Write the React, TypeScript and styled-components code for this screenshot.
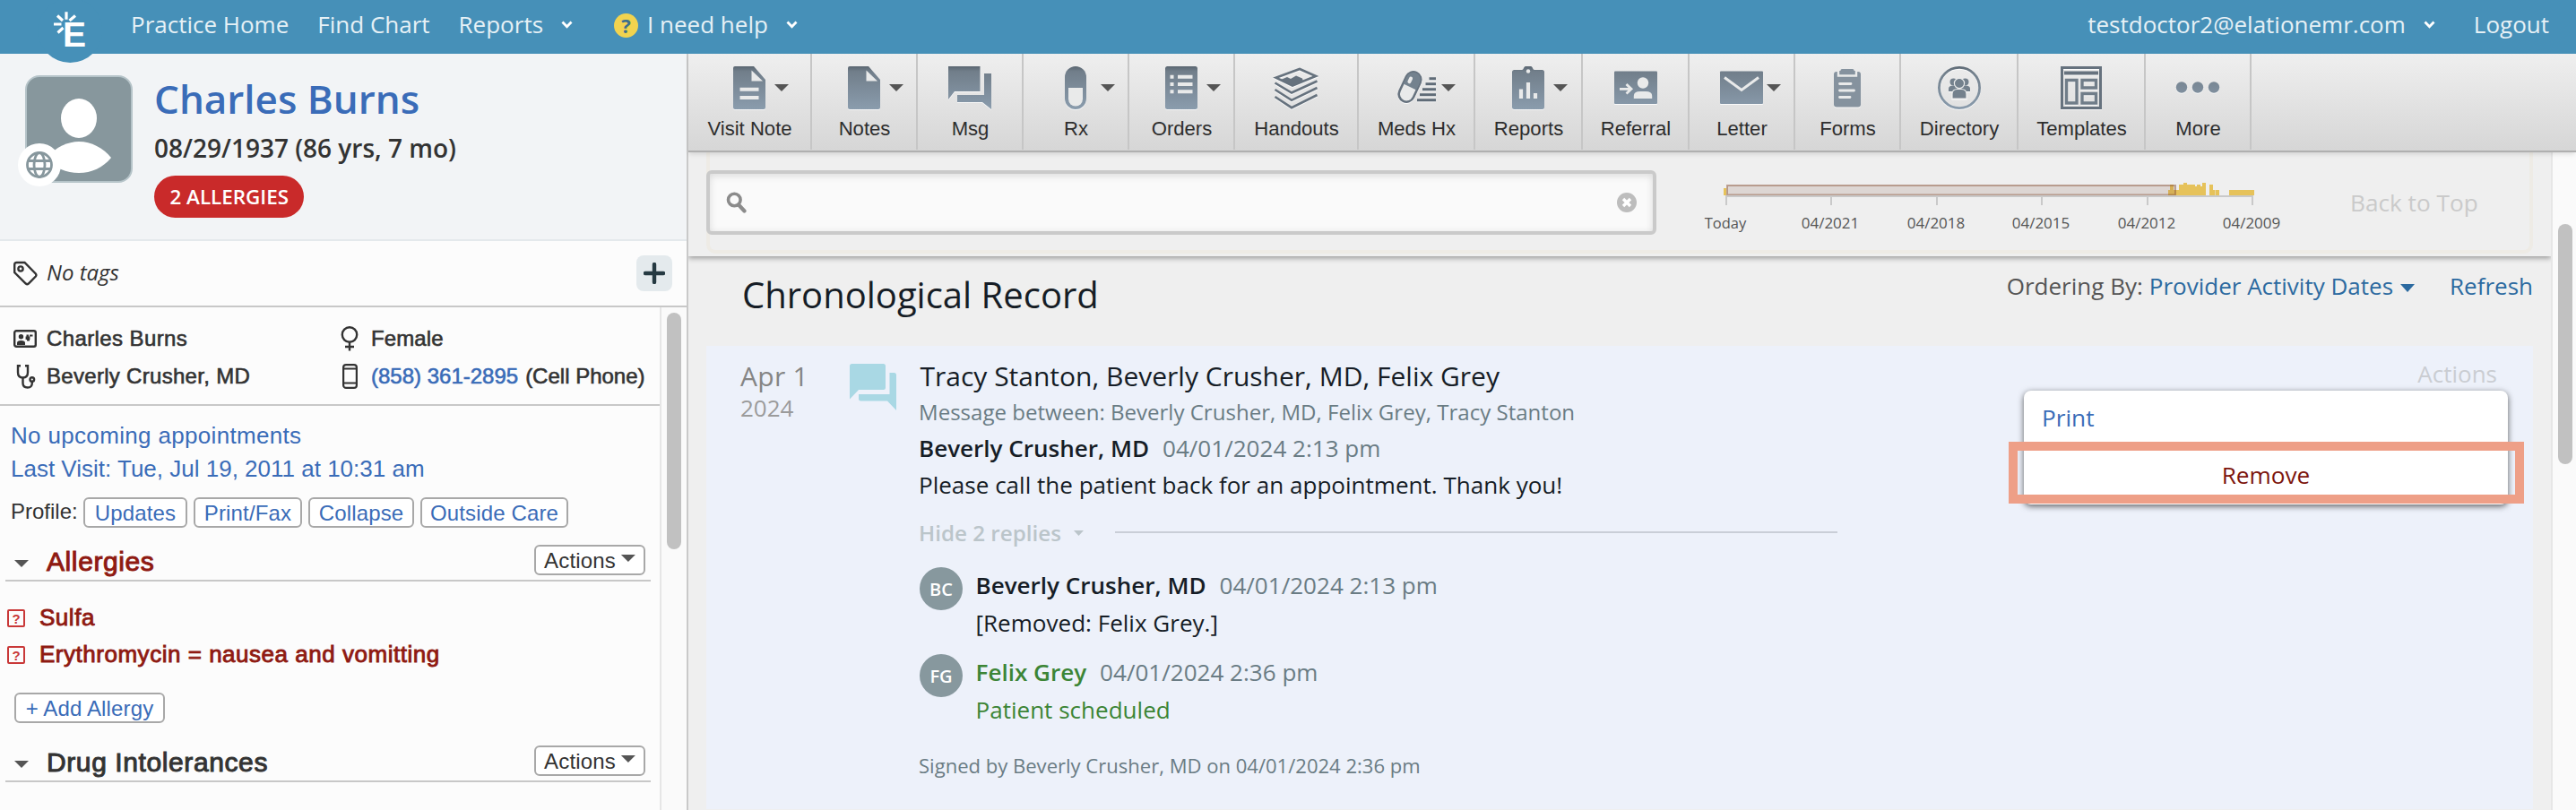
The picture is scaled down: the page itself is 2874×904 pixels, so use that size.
import React from 'react';
import styled, { createGlobalStyle } from 'styled-components';
import { FaUsers } from 'react-icons/fa';

const openSans = '"Open Sans", "Noto Sans", sans-serif';
const helvetica = '"Liberation Sans", Arial, sans-serif';
const link = '#3a6cb8';

const GlobalStyle = createGlobalStyle`
  * { box-sizing: border-box; }
  body { margin: 0; overflow: hidden; background: #efefef; }
`;

const Page = styled.div`
  display: flex;
  flex-direction: column;
  width: 2874px;
  height: 904px;
  overflow: hidden;
  font-family: ${openSans};
  color: #333;
  white-space: nowrap;
`;

/* ---------- top navigation ---------- */

const TopBar = styled.header`
  position: relative;
  z-index: 3;
  flex: none;
  display: flex;
  align-items: center;
  height: 60px;
  padding: 0 30px 6px 146px;
  background: #4690b8;
  color: #e6f1f6;
  font-size: 26px;
  line-height: 54px;
`;
const Logo = styled.svg`
  position: absolute;
  left: 42px;
  top: 0;
`;
const NavItem = styled.span<{ $before?: number }>`
  display: flex;
  align-items: center;
  gap: 20px;
  margin-left: ${(p) => p.$before ?? 0}px;
`;
const HelpMark = styled.span`
  width: 27px;
  height: 27px;
  margin: 2px -10px 0 0;
  border-radius: 50%;
  background: #f1d34f;
  color: #3c6f8c;
  font: 700 22px/27px ${openSans};
  text-align: center;
`;
const Spacer = styled.span`
  flex: 1;
`;

const Chevron = () => (
  <svg width="13" height="9" viewBox="0 0 13 9">
    <path d="M1.5 1.5 6.5 6.8 11.5 1.5" fill="none" stroke="#fff" strokeWidth="2.8" />
  </svg>
);

/* ---------- shared ---------- */

const Triangle = styled.span<{ $w?: number; $h?: number; $color?: string }>`
  flex: none;
  width: ${(p) => p.$w ?? 16}px;
  height: ${(p) => p.$h ?? 8}px;
  background: ${(p) => p.$color ?? '#555'};
  clip-path: polygon(0 0, 100% 0, 50% 100%);
`;
const Body = styled.div`
  flex: 1;
  min-height: 0;
  display: flex;
`;
const ScrollTrack = styled.div<{ $w: number; $top: number }>`
  flex: none;
  width: ${(p) => p.$w}px;
  padding: ${(p) => p.$top}px 0 0 6px;
  border-left: 2px solid #e6e6e6;
  background: #fafafa;
`;
const ScrollThumb = styled.div<{ $h: number }>`
  width: 16px;
  height: ${(p) => p.$h}px;
  border-radius: 8px;
  background: #c1c1c1;
`;

/* ---------- sidebar ---------- */

const Sidebar = styled.aside`
  flex: none;
  display: flex;
  flex-direction: column;
  width: 768px;
  border-right: 2px solid #c9c9c9;
  background: #fcfcfc;
`;
const Patient = styled.div`
  flex: none;
  display: flex;
  gap: 24px;
  height: 209px;
  padding: 20px 0 0 28px;
  border-bottom: 2px solid #e4e9ec;
  background: #f2f4f6;
`;
const Portrait = styled.svg`
  margin: 4px 0 0 -10px;
`;
const PatientText = styled.div`
  display: flex;
  flex-direction: column;
  align-items: flex-start;
`;
const PatientName = styled.div`
  color: ${link};
  font-size: 44px;
  font-weight: 600;
  line-height: 60px;
`;
const PatientBirth = styled.div`
  margin: 7px 0 13px;
  font-size: 28px;
  font-weight: 600;
  line-height: 36px;
`;
const AllergyBadge = styled.div`
  padding: 0 17.5px;
  border-radius: 24px;
  background: #c92a2a;
  color: #fff;
  font-size: 22.4px;
  font-weight: 600;
  line-height: 47px;
`;
const TagsRow = styled.div`
  flex: none;
  display: flex;
  align-items: center;
  height: 74px;
  padding: 0 16px 0 14px;
  border-bottom: 2px solid #c8c8c8;
`;
const NoTags = styled.span`
  flex: 1;
  margin: -3px 0 0 10px;
  font-size: 24px;
  font-style: italic;
`;
const PlusButton = styled.div`
  display: grid;
  place-items: center;
  width: 40px;
  height: 40px;
  border-radius: 8px;
  background: #e4eaed;
`;
const SideScroll = styled.div`
  flex: 1;
  min-height: 0;
  display: flex;
  font-family: ${helvetica};
`;
const SideContent = styled.div`
  flex: 1;
  min-width: 0;
`;
const InfoGrid = styled.div`
  display: grid;
  grid-template-columns: 362px 1fr;
  grid-auto-rows: 42px;
  height: 110px;
  padding: 14px 0 0 15px;
  border-bottom: 2px solid #c8c8c8;
`;
const InfoCell = styled.div<{ $spacing?: number }>`
  display: flex;
  align-items: center;
  font-size: 24px;
  letter-spacing: ${(p) => p.$spacing ?? 0}px;
  -webkit-text-stroke: 0.6px currentColor;
  svg { flex: none; margin-right: 11px; -webkit-text-stroke: 0; }
`;
const Blue = styled.span`
  margin-right: 8px;
  color: ${link};
`;
const Visits = styled.div`
  padding: 15px 0 13px 12px;
  color: ${link};
  font-size: 26px;
  line-height: 37px;
  div:first-child { letter-spacing: 0.33px; }
`;
const ProfileRow = styled.div`
  display: flex;
  gap: 7px;
  padding-left: 12px;
  margin-bottom: 19px;
  font-size: 24px;
  line-height: 31px;
  > span { width: 74px; }
`;
const SmallButton = styled.div<{ $w: number; $plain?: boolean }>`
  display: flex;
  justify-content: center;
  gap: 6px;
  width: ${(p) => p.$w}px;
  height: 34px;
  border: 2px solid #a8a8a8;
  border-radius: 6px;
  background: #fff;
  color: ${(p) => (p.$plain ? '#333' : link)};
  font-size: 24px;
  line-height: 32px;
  letter-spacing: 0.15px;
`;
const ButtonCaret = styled(Triangle)`
  margin-top: 9px;
`;
const SectionHead = styled.div<{ $color: string }>`
  display: flex;
  height: 41px;
  margin: 0 10px 0 6px;
  padding: 0 6px 0 10px;
  border-bottom: 2px solid #c8c8c8;
  color: ${(p) => p.$color};
  font-size: 30px;
  line-height: 37px;
  letter-spacing: 0.6px;
  -webkit-text-stroke: 1px currentColor;
  > span:nth-child(2) { flex: 1; margin-left: 20px; }
  ${SmallButton} { -webkit-text-stroke: 0; }
`;
const SectionCaret = styled(Triangle)`
  margin-top: 17px;
`;
const AllergyList = styled.div`
  padding: 20px 0 22px 8px;
`;
const AllergyItem = styled.div`
  display: flex;
  align-items: center;
  gap: 16px;
  height: 41px;
  color: #8f1a12;
  font-size: 26px;
  letter-spacing: 0.52px;
  -webkit-text-stroke: 0.9px currentColor;
`;
const Unknown = styled.span`
  width: 20px;
  height: 20px;
  border: 2px solid #c93838;
  border-radius: 2px;
  color: #c93838;
  font: 700 15px/17px ${helvetica};
  letter-spacing: 0;
  text-align: center;
  -webkit-text-stroke: 0;
`;
const AddRow = styled.div`
  padding: 0 0 25px 16px;
`;

/* ---------- chart toolbar ---------- */

const Main = styled.main`
  flex: 1;
  min-width: 0;
  display: flex;
  flex-direction: column;
`;
const Toolbar = styled.div`
  position: relative;
  z-index: 2;
  flex: none;
  display: flex;
  height: 110px;
  border-bottom: 2px solid #b0b0b0;
  background: linear-gradient(#efefef, #d6d6d6);
  box-shadow: 0 3px 5px -1px rgba(0, 0, 0, 0.12);
`;
const Tool = styled.div<{ $w: number }>`
  display: grid;
  grid-template-columns: 1fr 48px 1fr;
  grid-template-rows: 48px 28px;
  row-gap: 8px;
  width: ${(p) => p.$w}px;
  height: 107px;
  padding-top: 14px;
  border-right: 2px solid #c6c6c6;
`;
const ToolIcon = styled.svg`
  grid-column: 2;
  overflow: visible;
  filter: drop-shadow(0 1.5px 0.5px rgba(255, 255, 255, 0.8));
`;
const ToolCaret = styled(Triangle)`
  align-self: center;
  margin-left: 4px;
`;
const ToolLabel = styled.div`
  grid-column: 1 / -1;
  grid-row: 2;
  padding-left: 1px;
  color: #2e2e2e;
  font: 22.1px/28px ${helvetica};
  text-align: center;
`;

/* ---------- search strip ---------- */

const MainScroll = styled.div`
  flex: 1;
  min-height: 0;
  display: flex;
`;
const MainContent = styled.div`
  flex: 1;
  min-width: 0;
  overflow: hidden;
`;
const SearchStrip = styled.div`
  height: 116px;
  padding: 0 20px;
  background: #efefef;
  box-shadow: 0 2px 6px rgba(0, 0, 0, 0.38);
`;
const StripFrame = styled.div`
  display: flex;
  height: 113px;
  border: 4px solid #eeebe5;
  border-top: 0;
  border-radius: 0 0 10px 10px;
`;
const SearchBox = styled.div`
  display: flex;
  align-items: center;
  justify-content: space-between;
  width: 1060px;
  height: 72px;
  margin: 20px 52px 0 -4px;
  padding: 0 18px;
  border: 4px solid #cacaca;
  border-radius: 6px;
  background: #fafafa;
  box-shadow: inset 0 2px 8px rgba(0, 0, 0, 0.13);
`;
const Timeline = styled.svg`
  margin-top: 20px;
  font: 17px ${openSans};
`;
const BackToTop = styled.span`
  margin: 36px 0 0 73px;
  color: #cacaca;
  font-size: 26.2px;
  line-height: 40px;
`;

/* ---------- record ---------- */

const RecordHead = styled.div`
  display: flex;
  height: 100px;
  padding: 13px 20px 0 60px;
  color: #555;
  font-size: 26px;
  line-height: 40px;
`;
const RecordTitle = styled.h1`
  flex: 1;
  margin: 0;
  color: #161d26;
  font-size: 40px;
  font-weight: 400;
  line-height: 60px;
`;
const RecordLink = styled.span`
  margin-left: 7px;
  color: #2c6aa0;
`;
const OrderCaret = styled(Triangle)`
  margin: 18px 39px 0 8px;
`;
const Refresh = styled(RecordLink)`
  margin-left: 0;
`;
const Card = styled.div`
  position: relative;
  display: flex;
  height: 517px;
  margin: 0 20px;
  padding: 14px 40px 0 38px;
  background: #edf1fa;
  color: #161d26;
  font-size: 26px;
`;
const DateColumn = styled.div`
  width: 122px;
  color: #9b9b9b;
  line-height: 32px;
`;
const Day = styled.div`
  color: #858585;
  font-size: 30px;
  line-height: 39px;
  letter-spacing: 0.3px;
`;
const MessageIcon = styled.svg`
  flex: none;
  margin: 6px 25px 0 0;
`;
const Thread = styled.div`
  flex: 1;
`;
const ThreadTitle = styled.div`
  padding-left: 1.5px;
  font-size: 30px;
  line-height: 39px;
`;
const Line = styled.div<{ $h: number; $size?: number; $color?: string }>`
  height: ${(p) => p.$h}px;
  color: ${(p) => p.$color ?? 'inherit'};
  font-size: ${(p) => p.$size ?? 26.05}px;
  line-height: ${(p) => p.$h}px;
  strong { font-weight: 600; }
`;
const Stamp = styled.span`
  margin-left: 15px;
  color: #6a7c84;
`;
const HideReplies = styled.div`
  display: flex;
  align-items: center;
  width: 1025px;
  height: 40px;
  margin: 12px 0 18px;
  color: #bbc5ca;
  font-size: 24.2px;
  font-weight: 600;
`;
const HideCaret = styled(Triangle)`
  margin: 2px 35px 0 14px;
`;
const Rule = styled.span`
  flex: 1;
  height: 2px;
  background: #c9ced7;
`;
const Reply = styled.div`
  display: flex;
  gap: 14.5px;
  margin-bottom: 13px;
  padding-left: 1px;
`;
const Initials = styled.div`
  width: 48px;
  height: 48px;
  margin-top: 1px;
  border-radius: 50%;
  background: #87989e;
  color: #fff;
  font-size: 20px;
  font-weight: 600;
  line-height: 49px;
  text-align: center;
`;
const Signed = styled(Line)`
  margin-top: 21px;
`;
const CardActions = styled.span`
  margin-top: -3px;
  color: #cacdd2;
  line-height: 40px;
`;
const Menu = styled.div`
  position: absolute;
  top: 50px;
  right: 28px;
  width: 540px;
  height: 127px;
  padding-top: 9px;
  border-radius: 8px;
  background: #fff;
  box-shadow: 0 2px 7px rgba(0, 0, 0, 0.62);
`;
const MenuItem = styled.div<{ $danger?: boolean }>`
  height: 64px;
  padding: 0 20px;
  color: ${(p) => (p.$danger ? '#7d160e' : link)};
  font-size: 26.2px;
  line-height: 42px;
  text-align: ${(p) => (p.$danger ? 'center' : 'left')};
`;
const Highlight = styled.div`
  position: absolute;
  top: 57px;
  left: -17px;
  width: 575px;
  height: 69px;
  border: 10px solid #ee9f87;
`;

/* ---------- icons ---------- */

const fill = 'url(#toolFill)';
const light = '#e9eaea';
const DocShape = () => (
  <>
    <path d="M8 0H29L42 15V46Q42 48 40 48H8Q6 48 6 46V2Q6 0 8 0Z" fill={fill} />
    <path d="M26.5 4.5V16.5H39Z" fill={light} />
  </>
);

const toolIcons: Record<string, React.ReactNode> = {
  'Visit Note': (
    <>
      <DocShape />
      <path d="M13.5 25.7H34.5M13.5 35H34.5" stroke={light} strokeWidth="4" />
    </>
  ),
  Notes: <DocShape />,
  Msg: (
    <>
      <path d="M0 0H35.5V28H7L0 37Z" fill={fill} />
      <path d="M40 8H48V48L38 40H10V32H40Z" fill={fill} />
    </>
  ),
  Rx: (
    <>
      <rect x="12" y="0" width="24" height="48" rx="12" fill={fill} />
      <path d="M16 24H32V36.5A8 8 0 0 1 16 36.5Z" fill={light} />
    </>
  ),
  Orders: (
    <>
      <rect x="6" width="36" height="48" rx="2.5" fill={fill} />
      <path d="M11.5 11.7H15.5M20 11.7H36.5M11.5 20H15.5M20 20H36.5M11.5 28.3H15.5M20 28.3H36.5" stroke={light} strokeWidth="4" />
    </>
  ),
  Handouts: (
    <>
      <g fill="none" stroke="#66727e" strokeWidth="2.6">
        <path d="M1.5 12.7 28 3 46 11 20 21.5Z" />
        <path d="M.5 18.5 19 29.5 47.5 16.5M.5 26 19 37.8 47.5 24M.5 34 19 46.2 47.5 32" />
      </g>
      <path d="M7 15 14 12 18 14 24 10.5 31 13.5 32 17 20 21.5Z" fill="#66727e" />
    </>
  ),
  'Meds Hx': (
    <>
      <g transform="rotate(25 17 23)">
        <rect x="8.5" y="5.5" width="17" height="35" rx="8.5" fill={light} stroke="#66727e" strokeWidth="2.6" />
        <path d="M9 23V14A8 8 0 0 1 25 14V23Z" fill="#74828e" />
        <rect x="12" y="12" width="4" height="8" rx="2" fill={light} />
      </g>
      <path d="M38.5 13.8H46M34.5 19.8H46M31 25.8H46M28 31.8H46M25 37.8H46" stroke="#5f6b77" strokeWidth="3" />
    </>
  ),
  Reports: (
    <>
      <path d="M8.5 4H17C19 4 19 0 21 0H27C29 0 29 4 31 4H39.5Q42 4 42 6.5V45.5Q42 48 39.5 48H8.5Q6 48 6 45.5V6.5Q6 4 8.5 4Z" fill={fill} />
      <circle cx="24" cy="5.5" r="2.2" fill={light} />
      <path d="M16 25.5V36M24 18V36M32 30V36" stroke={light} strokeWidth="4.2" />
    </>
  ),
  Referral: (
    <>
      <rect y="5.5" width="48" height="36.5" rx="1" fill={fill} />
      <path d="M6 25.3H17M13.5 20 19 25.3 13.5 30.5" fill="none" stroke={light} strokeWidth="2.8" />
      <circle cx="32" cy="18.5" r="6.2" fill={light} />
      <path d="M21.8 36V33Q21.8 28 29 28H35Q42.2 28 42.2 33V36Z" fill={light} />
    </>
  ),
  Letter: (
    <>
      <rect y="5.5" width="48" height="36.5" rx="1" fill={fill} />
      <path d="M5 12.5 24 26.5 43 12.5" fill="none" stroke={light} strokeWidth="3" />
    </>
  ),
  Forms: (
    <>
      <rect x="9" y="6" width="30" height="39.5" rx="3" fill="#85929e" />
      <path d="M14 5V10.5H34V5" fill="#85929e" stroke={light} strokeWidth="2.4" />
      <rect x="16.5" y="3" width="15" height="6" rx="1.5" fill="#85929e" />
      <path d="M15.5 19.5H28M15.5 27H31.5M15.5 34.5H27" stroke={light} strokeWidth="2.8" strokeLinecap="round" />
    </>
  ),
  Directory: (
    <>
      <circle cx="24" cy="24" r="22.6" fill="none" stroke={fill} strokeWidth="2.8" />
      <g fill="#74818d">
        <circle cx="17.5" cy="17.5" r="4" />
        <circle cx="30.5" cy="17.5" r="4" />
        <path d="M12 28V25Q12 21.500 17 21.500H31Q36 21.500 36 25V28Z" />
        <circle cx="24" cy="19" r="5.6" stroke={light} strokeWidth="1.2" />
        <path d="M16 36V31Q16 25.500 22 25.500H26Q32 25.500 32 31V36Z" stroke={light} strokeWidth="1.2" />
      </g>
    </>
  ),
  Templates: (
    <>
      <path d="M2.5 1.5H45.5V46.5H2.5Z" fill="none" stroke="#66727e" strokeWidth="3" />
      <path d="M5 7.5H43" stroke="#66727e" strokeWidth="4" />
      <path d="M7.5 15.5H19V41H7.5ZM25 15.5H40.5V24H25ZM25 30.5H40.5V41H25Z" fill="none" stroke="#707d89" strokeWidth="3.4" />
    </>
  ),
  More: (
    <>
      <circle cx="6" cy="23.5" r="6.2" fill={fill} />
      <circle cx="24" cy="23.5" r="6.2" fill={fill} />
      <circle cx="42" cy="23.5" r="6.2" fill={fill} />
    </>
  ),
};

const tools: { label: string; w: number; menu?: boolean }[] = [
  { label: 'Visit Note', w: 138, menu: true },
  { label: 'Notes', w: 118, menu: true },
  { label: 'Msg', w: 118 },
  { label: 'Rx', w: 118, menu: true },
  { label: 'Orders', w: 118, menu: true },
  { label: 'Handouts', w: 138 },
  { label: 'Meds Hx', w: 130, menu: true },
  { label: 'Reports', w: 120, menu: true },
  { label: 'Referral', w: 119 },
  { label: 'Letter', w: 118, menu: true },
  { label: 'Forms', w: 118 },
  { label: 'Directory', w: 131 },
  { label: 'Templates', w: 142 },
  { label: 'More', w: 118 },
];

const ticks: [number, string][] = [
  [26, 'Today'], [143, '04/2021'], [261, '04/2018'], [378, '04/2015'], [496, '04/2012'], [613, '04/2009'],
];

/* x, width and height of each activity column */
const activity: [number, number, number][] = [
  [23, 3, 8], [519, 42, 6], [521, 4, 12], [531, 5, 12], [535, 2, 10], [536, 4, 14], [540, 9, 12], [549, 2, 10],
  [551, 4, 12], [555, 2, 10], [557, 4, 14], [565, 4, 12], [569, 2.5, 6], [572, 4, 6], [587, 28, 6],
];

const Actions = () => (
  <SmallButton $w={124} $plain>
    Actions
    <ButtonCaret />
  </SmallButton>
);

export default function App() {
  return (
    <Page>
      <GlobalStyle />
      <TopBar>
        <Logo width="72" height="72" viewBox="42 0 72 72">
          <circle cx="78.3" cy="34" r="36" fill="#4690b8" />
          <path d="M74 13.3V21.7M64 17.5 70 23M60 27H68.5M64.5 36.5 70.5 31M77.5 23 84 17.5" stroke="#fff" strokeWidth="3.2" fill="none" />
          <text x="70" y="52.3" fill="#fff" fontSize="39" fontWeight="700" fontFamily={helvetica}>E</text>
        </Logo>
        <NavItem>Practice Home</NavItem>
        <NavItem $before={32}>Find Chart</NavItem>
        <NavItem $before={32}>Reports<Chevron /></NavItem>
        <NavItem $before={46}><HelpMark>?</HelpMark>I need help<Chevron /></NavItem>
        <Spacer />
        <NavItem>testdoctor2@elationemr.com<Chevron /></NavItem>
        <NavItem $before={43}>Logout</NavItem>
      </TopBar>
      <Body>
        <Sidebar>
          <Patient>
            <Portrait width="130" height="126" viewBox="18 84 130 126">
              <rect x="29" y="85" width="118" height="118" rx="15" fill="#87979d" stroke="#b6c4c9" strokeWidth="2" />
              <ellipse cx="88" cy="132" rx="20" ry="22" fill="#fff" />
              <path d="M52 176C62 164 76 158 88 158C102 158 115 165 124 176C115 187 102 193 88 193C74 193 61 188 52 176Z" fill="#fff" />
              <circle cx="44" cy="184" r="24" fill="#fff" />
              <g fill="none" stroke="#87979d" strokeWidth="2.8">
                <circle cx="44" cy="184" r="13.5" />
                <ellipse cx="44" cy="184" rx="6" ry="13.5" />
                <path d="M31.5 179.5H56.5M31.5 188.5H56.5" />
              </g>
            </Portrait>
            <PatientText>
              <PatientName>Charles Burns</PatientName>
              <PatientBirth>08/29/1937 (86 yrs, 7 mo)</PatientBirth>
              <AllergyBadge>2 ALLERGIES</AllergyBadge>
            </PatientText>
          </Patient>
          <TagsRow>
            <svg width="28" height="28" viewBox="0 0 28 28" fill="none" stroke="#333" strokeWidth="2.4">
              <path d="M2.2 4.5Q2.2 2 4.7 2H13.5L25.8 14.5Q27 16 25.800 17.500L17.800 25.500Q16.300 26.800 14.800 25.500L2.200 13Z" />
              <circle cx="9" cy="9" r="2.6" />
            </svg>
            <NoTags>No tags</NoTags>
            <PlusButton>
              <svg width="24" height="24" viewBox="0 0 24 24">
                <path d="M12 2V22M2 12H22" stroke="#263a42" strokeWidth="4.4" strokeLinecap="round" />
              </svg>
            </PlusButton>
          </TagsRow>
          <SideScroll>
            <SideContent>
              <InfoGrid>
                <InfoCell $spacing={0.4}>
                  <svg width="26" height="20" viewBox="0 0 26 20" fill="#333">
                    <rect x="1.2" y="1.2" width="23.6" height="17.6" rx="2" fill="none" stroke="#333" strokeWidth="2.4" />
                    <circle cx="8.5" cy="7.8" r="2.7" />
                    <path d="M4 17V14.5Q4 12 8.5 12T13 14.5V17Z" />
                    <path d="M14.500 6.500H17M18 6.500H21.500M14.500 8.500H17.500V10H14.500ZM15 11.500H18" stroke="#333" strokeWidth="1.8" />
                  </svg>
                  Charles Burns
                </InfoCell>
                <InfoCell $spacing={0.1}>
                  <svg width="26" height="28" viewBox="0 0 26 28" fill="none" stroke="#333" strokeWidth="2.4">
                    <circle cx="13" cy="9.5" r="8.2" />
                    <path d="M13 17.7V27.5M8 23H18" />
                  </svg>
                  Female
                </InfoCell>
                <InfoCell $spacing={0.3}>
                  <svg width="26" height="28" viewBox="0 0 26 28" fill="none" stroke="#333" strokeWidth="2.4">
                    <path d="M8 2.2H5V9.500Q5 15.500 10.500 15.500T16 9.500V2.200H13" />
                    <path d="M10.500 15.500V21.500Q10.500 26.500 15.700 26.500T20.800 21.500V20" />
                    <circle cx="20.800" cy="17.500" r="2.300" />
                  </svg>
                  Beverly Crusher, MD
                </InfoCell>
                <InfoCell>
                  <svg width="26" height="28" viewBox="0 0 26 28" fill="none" stroke="#333" strokeWidth="2.2">
                    <rect x="6.1" y="1.1" width="14.8" height="25.8" rx="3" />
                    <path d="M6 5.5H21M6 21.5H21" />
                  </svg>
                  <Blue>(858) 361-2895</Blue>
                  (Cell Phone)
                </InfoCell>
              </InfoGrid>
              <Visits>
                <div>No upcoming appointments</div>
                <div>Last Visit: Tue, Jul 19, 2011 at 10:31 am</div>
              </Visits>
              <ProfileRow>
                <span>Profile:</span>
                <SmallButton $w={116}>Updates</SmallButton>
                <SmallButton $w={121}>Print/Fax</SmallButton>
                <SmallButton $w={118}>Collapse</SmallButton>
                <SmallButton $w={165}>Outside Care</SmallButton>
              </ProfileRow>
              <SectionHead $color="#8f1a12">
                <SectionCaret />
                <span>Allergies</span>
                <Actions />
              </SectionHead>
              <AllergyList>
                <AllergyItem><Unknown>?</Unknown>Sulfa</AllergyItem>
                <AllergyItem><Unknown>?</Unknown>Erythromycin = nausea and vomitting</AllergyItem>
              </AllergyList>
              <AddRow>
                <SmallButton $w={168}>+ Add Allergy</SmallButton>
              </AddRow>
              <SectionHead $color="#333">
                <SectionCaret />
                <span>Drug Intolerances</span>
                <Actions />
              </SectionHead>
            </SideContent>
            <ScrollTrack $w={30} $top={6}>
              <ScrollThumb $h={264} />
            </ScrollTrack>
          </SideScroll>
        </Sidebar>
        <Main>
          <Toolbar>
            {tools.map((t, i) => (
              <Tool key={t.label} $w={t.w}>
                <ToolIcon width="48" height="48" viewBox="0 0 48 48">
                  {i === 0 && (
                    <defs>
                      <linearGradient id="toolFill" gradientUnits="userSpaceOnUse" x1="0" y1="0" x2="0" y2="48">
                        <stop offset="0" stopColor="#5a6671" />
                        <stop offset="0.12" stopColor="#717e8a" />
                        <stop offset="1" stopColor="#8a9cad" />
                      </linearGradient>
                    </defs>
                  )}
                  {toolIcons[t.label]}
                </ToolIcon>
                {t.menu && <ToolCaret />}
                <ToolLabel>{t.label}</ToolLabel>
              </Tool>
            ))}
          </Toolbar>
          <MainScroll>
            <MainContent>
              <SearchStrip>
                <StripFrame>
                  <SearchBox>
                    <svg width="24" height="24" viewBox="0 0 24 24" fill="none" stroke="#8b8b8b">
                      <circle cx="9.3" cy="9" r="6.8" strokeWidth="3.6" />
                      <path d="M14 14.5 20.5 21.5" strokeWidth="4.2" strokeLinecap="round" />
                    </svg>
                    <svg width="22" height="22" viewBox="0 0 22 22">
                      <circle cx="11" cy="11" r="11" fill="#bdbdbd" />
                      <path d="M7 7 15 15M15 7 7 15" stroke="#fff" strokeWidth="3.4" />
                    </svg>
                  </SearchBox>
                  <Timeline width="649" height="80" viewBox="0 190 649 80">
                    {activity.map(([x, w, h]) => (
                      <rect key={x} x={x} y={218 - h} width={w} height={h} fill="#e6c25a" />
                    ))}
                    <rect x="27" y="207" width="500" height="10.5" fill="rgba(130,85,70,0.16)" stroke="rgba(140,85,60,0.5)" strokeWidth="2" />
                    <path d="M26 219H614" stroke="#c9c9c9" strokeWidth="2" />
                    {ticks.map(([x, label]) => (
                      <React.Fragment key={label}>
                        <path d={`M${x} 218V229`} stroke="#c9c9c9" strokeWidth="2" />
                        <text x={x - 1} y="255" textAnchor="middle" fill="#555" fontSize={label === 'Today' ? 16.5 : 17}>{label}</text>
                      </React.Fragment>
                    ))}
                  </Timeline>
                  <BackToTop>Back to Top</BackToTop>
                </StripFrame>
              </SearchStrip>
              <RecordHead>
                <RecordTitle>Chronological Record</RecordTitle>
                Ordering By:
                <RecordLink>Provider Activity Dates</RecordLink>
                <OrderCaret $h={9} $color="#2c6aa0" />
                <Refresh>Refresh</Refresh>
              </RecordHead>
              <Card>
                <DateColumn>
                  <Day>Apr 1</Day>
                  2024
                </DateColumn>
                <MessageIcon width="52" height="52" viewBox="0 0 52 52" fill="#a9d8e4">
                  <path d="M2.5 0H37.5Q40 0 40 2.5V26.5Q40 29 37.5 29H10L0 39.5V2.5Q0 0 2.5 0Z" />
                  <path d="M44.5 10H49.5Q52 10 52 12.5V52L42 41.5H12.5Q10 41.5 10 39V34H44.5Z" />
                </MessageIcon>
                <Thread>
                  <ThreadTitle>Tracy Stanton, Beverly Crusher, MD, Felix Grey</ThreadTitle>
                  <Line $h={41} $size={24.05} $color="#6a7c84">Message between: Beverly Crusher, MD, Felix Grey, Tracy Stanton</Line>
                  <Line $h={40}><strong>Beverly Crusher, MD</strong><Stamp>04/01/2024 2:13 pm</Stamp></Line>
                  <Line $h={42}>Please call the patient back for an appointment. Thank you!</Line>
                  <HideReplies>
                    Hide 2 replies
                    <HideCaret $w={11} $h={6} $color="#bbc5ca" />
                    <Rule />
                  </HideReplies>
                  <Reply>
                    <Initials>BC</Initials>
                    <div>
                      <Line $h={42}><strong>Beverly Crusher, MD</strong><Stamp>04/01/2024 2:13 pm</Stamp></Line>
                      <Line $h={42}>[Removed: Felix Grey.]</Line>
                    </div>
                  </Reply>
                  <Reply>
                    <Initials>FG</Initials>
                    <div>
                      <Line $h={42} $color="#3c8536"><strong>Felix Grey</strong><Stamp>04/01/2024 2:36 pm</Stamp></Line>
                      <Line $h={42} $color="#3c8536">Patient scheduled</Line>
                    </div>
                  </Reply>
                  <Signed $h={40} $size={22.05} $color="#6a7c84">Signed by Beverly Crusher, MD on 04/01/2024 2:36 pm</Signed>
                </Thread>
                <CardActions>Actions</CardActions>
                <Menu>
                  <MenuItem>Print</MenuItem>
                  <MenuItem $danger>Remove</MenuItem>
                  <Highlight />
                </Menu>
              </Card>
            </MainContent>
            <ScrollTrack $w={28} $top={80}>
              <ScrollThumb $h={268} />
            </ScrollTrack>
          </MainScroll>
        </Main>
      </Body>
    </Page>
  );
}
